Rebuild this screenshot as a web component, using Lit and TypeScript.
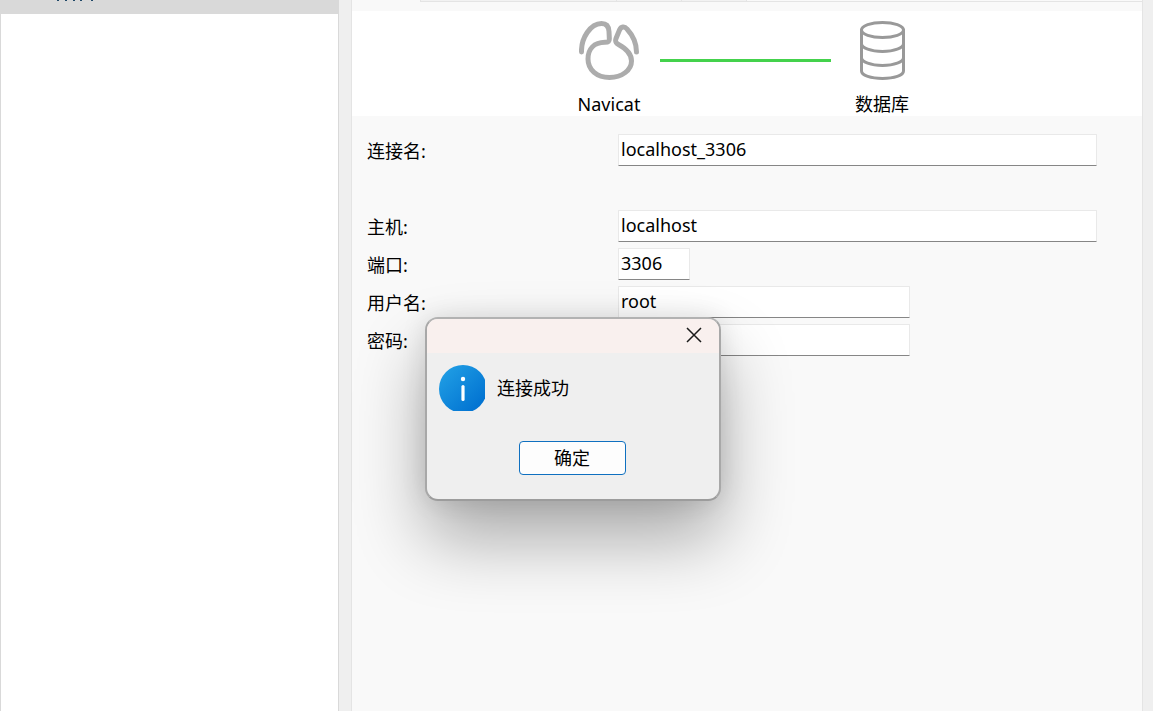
import { LitElement, html, css, svg } from "lit";
import { customElement } from "lit/decorators.js";

const navicatIcon = svg`<path d="M2.500 31C2 17 11.500 2.500 22.500 2.500C28 2.500 29.800 6 30 10.500L30.300 17C30.500 20.500 29.500 21.300 26 21.300C15 21.500 9 28 9 38C9 49 18 56.500 30.500 56.500C43 56.500 52.500 49 52.500 40C52.500 33 46 27 39.500 23.500C36.500 21.800 36 20.500 37 17.500L40.500 9C42 5.500 45.500 5 48 8C53.500 14 57.500 22 57.500 31"/>`;

const databaseIcon = svg`<ellipse cx="22.500" cy="9" rx="21" ry="7.500"/><path d="M1.500 9V50C1.500 54.500 11 57.500 22.500 57.500S43.500 54.500 43.500 50V9M1.500 22.500C1.500 27 11 30.500 22.500 30.500S43.500 27 43.500 22.500M1.500 36.500C1.500 41 11 44.500 22.500 44.500S43.500 41 43.500 36.500"/>`;

@customElement("app-root")
export class AppRoot extends LitElement {
  static styles = css`
    :host {
      display: block;
      position: relative;
      min-height: 100vh;
      background: #efefef;
      color: #000;
      font: 18px/24px "Noto Sans", "Noto Sans CJK SC", sans-serif;
    }
    * { box-sizing: border-box; }
    .window { display: flex; min-height: 100vh; }
    .tree {
      flex: 0 0 339px;
      background: #fff;
      border: solid #d9d9d9;
      border-width: 0 1px;
    }
    .selected { height: 14px; padding-left: 56px; background: #d9d9d9; }
    .selected svg { display: block; }
    .panel {
      flex: 1;
      min-width: 0;
      margin: 0 10px 0 12px;
      background: #f9f9f9;
      border: solid #e4e4e4;
      border-width: 0 1px;
    }
    .tabs { display: flex; height: 11px; padding-left: 68px; }
    .tab { width: 65px; height: 2px; background: #f2f2f2; border: solid #e4e4e4; border-width: 0 1px 1px 0; }
    .tab.first { width: 197px; border-left-width: 1px; }
    .tab.rest { flex: 1; border-right: 0; background: #f9f9f9; }
    .diagram {
      display: flex;
      justify-content: center;
      height: 105px;
      padding: 10px 3px 0 0;
      gap: 18px;
      background: #fff;
    }
    .node { display: flex; flex-direction: column; align-items: center; min-width: 66px; gap: 11px; }
    .node svg { height: 60px; fill: none; stroke-linecap: round; stroke-linejoin: round; }
    .link { width: 171px; height: 3px; margin-top: 38px; background: #44d24c; }
    .form { padding: 18px 45px 0 15px; display: grid; gap: 6px; }
    .row { display: flex; align-items: center; height: 32px; }
    .row.spaced { margin-bottom: 38px; }
    label { flex: 0 0 251px; padding-top: 2px; }
    .field {
      flex: 1;
      min-width: 0;
      height: 32px;
      padding: 0 2px 2px;
      font: inherit;
      color: inherit;
      background: #fff;
      border: 1px solid #e9e9e9;
      border-bottom-color: #868686;
      border-radius: 1px;
      outline: none;
    }
    .field.port { flex: 0 0 72px; }
    .field.medium { flex: 0 0 292px; }
    .dialog {
      position: absolute;
      left: 425px;
      top: 317px;
      width: 296px;
      background: #efefef;
      border: 2px solid #a8a8a8;
      border-top-color: #b2b2b2;
      border-bottom-color: #9c9c9c;
      border-radius: 13px;
      box-shadow: 0 38px 70px rgba(0, 0, 0, 0.32), 0 0 26px rgba(0, 0, 0, 0.11);
    }
    .title { display: flex; justify-content: flex-end; height: 34px; padding-right: 1px; background: #f9f0ee; border-radius: 11px 11px 0 0; }
    .close { width: 48px; height: 32px; padding: 0; border: 0; background: none; }
    .close svg { display: block; margin: 0 auto; }
    .message { display: flex; align-items: center; gap: 12px; padding: 12px 12px 0; }
    .message svg { display: block; }
    .actions { display: flex; justify-content: center; padding: 30px 2px 24px 0; }
    .ok {
      width: 107px;
      height: 34px;
      padding: 0;
      font: inherit;
      color: inherit;
      background: #fdfdfd;
      border: 1px solid #0f70c0;
      border-radius: 4px;
    }
  `;

  render() {
    return html`
      <div class="window">
        <aside class="tree">
          <div class="selected">
            <svg width="38" height="1" viewBox="0 0 38 1" fill="#204868" aria-hidden="true"><path d="M0 0h2v1h-2zM8 0h2v1h-2zM16 0h2v1h-2zM23 0h2v1h-2zM34 0h2v1h-2z" /></svg>
          </div>
        </aside>
        <main class="panel">
          <div class="tabs">
            <div class="tab first"></div><div class="tab"></div><div class="tab"></div><div class="tab rest"></div>
          </div>
          <section class="diagram">
            <div class="node">
              <svg width="60" height="60" viewBox="0 0 60 60" stroke="#acacac" stroke-width="5">${navicatIcon}</svg>
              <span>Navicat</span>
            </div>
            <div class="link"></div>
            <div class="node">
              <svg width="45" height="60" viewBox="0 0 45 60" stroke="#999" stroke-width="3">${databaseIcon}</svg>
              <span>数据库</span>
            </div>
          </section>
          <form class="form">
            <div class="row spaced"><label for="name">连接名:</label><input id="name" class="field" type="text" value="localhost_3306" /></div>
            <div class="row"><label for="host">主机:</label><input id="host" class="field" type="text" value="localhost" /></div>
            <div class="row"><label for="port">端口:</label><input id="port" class="field port" type="text" value="3306" /></div>
            <div class="row"><label for="user">用户名:</label><input id="user" class="field medium" type="text" value="root" /></div>
            <div class="row"><label for="password">密码:</label><input id="password" class="field medium" type="password" /></div>
          </form>
        </main>
      </div>
      <div class="dialog" role="alertdialog" aria-labelledby="message">
        <div class="title">
          <button class="close" aria-label="关闭">
            <svg width="16" height="16" viewBox="0 0 16 16" stroke="#1a1a1a" stroke-width="1.500"><path d="M1 1L15 15M15 1L1 15" /></svg>
          </button>
        </div>
        <div class="message">
          <svg width="46" height="46" viewBox="0 0 46 46">
            <defs><linearGradient id="blue" x1="0" y1="0" x2="1" y2="1"><stop offset=".1" stop-color="#1f9de4" /><stop offset=".9" stop-color="#0070d0" /></linearGradient></defs>
            <circle cx="24" cy="24" r="24" fill="url(#blue)" />
            <circle cx="24" cy="14" r="2.200" fill="#fff" />
            <path d="M24 21.500V34.500" stroke="#fff" stroke-width="3.200" stroke-linecap="round" />
          </svg>
          <span id="message">连接成功</span>
        </div>
        <div class="actions"><button class="ok">确定</button></div>
      </div>
    `;
  }
}
